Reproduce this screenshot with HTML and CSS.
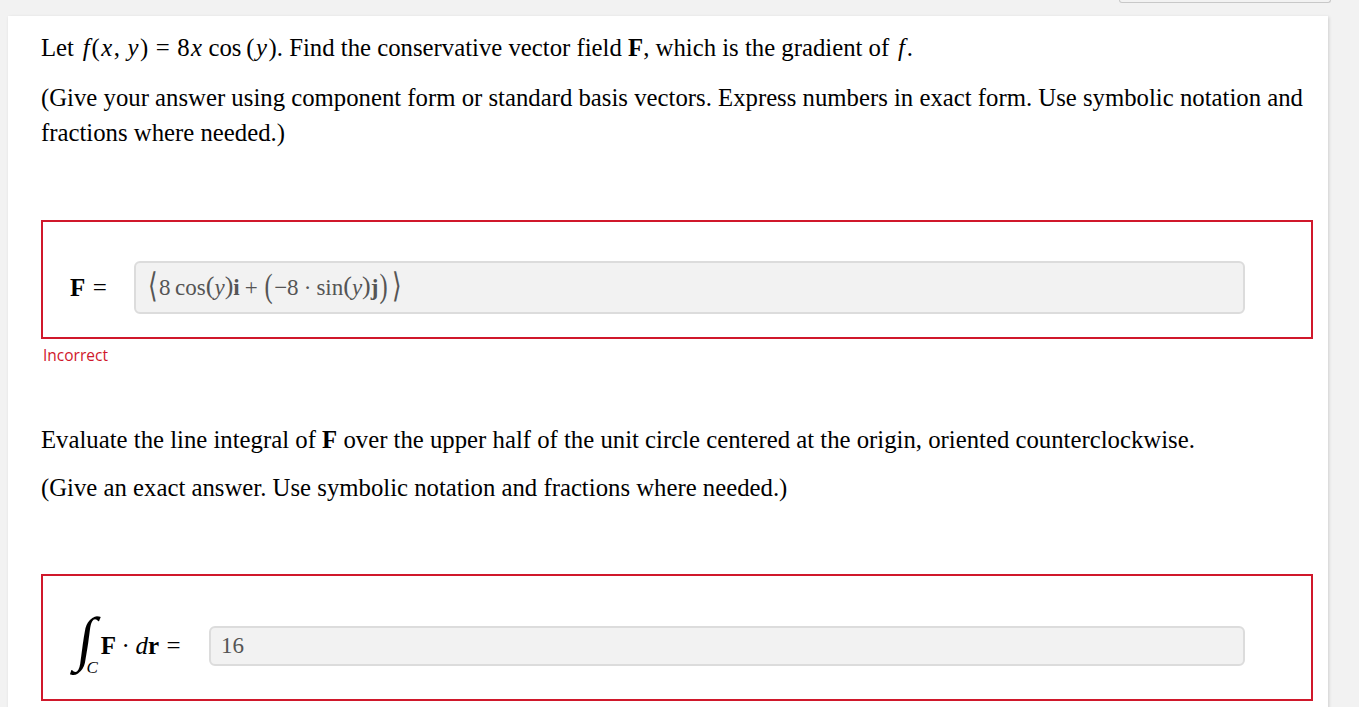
FILE: index.html
```html
<!DOCTYPE html>
<html lang="en">
<head>
  <meta charset="UTF-8" />
  <title>Conservative Vector Field</title>
  <meta name="viewport" content="width=device-width, initial-scale=1.0" />
  <link rel="stylesheet" href="styles.css">
</head>
<body>

<div class="top-bar">
  <div class="tab"></div>
</div>

<div class="card">
  <p class="q">Let <span class="m"><i class="fn">f</i>(<i>x</i>,&nbsp;<i>y</i>)<span class="eq">=</span>8<i>x</i>&thinsp;cos&thinsp;(<i>y</i>)</span>. Find the conservative vector field <b>F</b>, which is the gradient of <span class="m"><i class="fn">f</i></span>.</p>
  <p class="q">(Give your answer using component form or standard basis vectors. Express numbers in exact form. Use symbolic notation and fractions where needed.)</p>

  <div class="answer-box box-one">
    <div class="label"><b>F</b><span class="eq">=</span></div>
    <div class="field field-tall">
      <span class="big">&#10216;</span>8&thinsp;cos<span class="mid">(</span><i>y</i><span class="mid">)</span><b>i</b><span class="op">+</span><span class="big">(</span>&minus;8<span class="op">&middot;</span>sin<span class="mid">(</span><i>y</i><span class="mid">)</span><b>j</b><span class="big">)</span><span class="big">&#10217;</span>
    </div>
  </div>
  <div class="status">Incorrect</div>

  <p class="q q-gap">Evaluate the line integral of <b>F</b> over the upper half of the unit circle centered at the origin, oriented counterclockwise.</p>
  <p class="q q-tight">(Give an exact answer. Use symbolic notation and fractions where needed.)</p>

  <div class="answer-box box-two">
    <div class="label integral">
      <span class="int">&int;</span><span class="sub">C</span>
      <span class="int-rest"><b>F</b><span class="op">&middot;</span><i>d</i><b>r</b><span class="eq">=</span></span>
    </div>
    <div class="field field-short">16</div>
  </div>
</div>

</body>
</html>
```

FILE: styles.css
```css
body { margin: 0; background: #f2f2f2; font-family: "Liberation Serif", "Times New Roman", serif; color: #000; }
.top-bar { display: flex; justify-content: flex-end; padding-right: 28px; height: 16px; }
.tab { width: 210px; height: 2px; border: 1px solid #c8c8c8; border-top: none; border-radius: 0 0 5px 5px; background: #f2f2f2; }
.card { margin-left: 8px; width: 1272px; background: #fff; padding: 14px 15px 8px 33px; box-shadow: 1px 1px 3px rgba(0,0,0,0.15); }
.q { font-size: 24.75px; line-height: 35px; margin: 0 0 15px 0; }
.q-gap { margin-top: 57px; margin-bottom: 13px; }
.q-tight { margin-bottom: 0; }
.m i { font-style: italic; margin: 0 0.06em; }
.m .fn { margin: 0 0.08em 0 0.1em; }
.eq { margin: 0 0.3em; }
.op { margin: 0 0.22em; }
.answer-box { border: 2px solid #d0182b; margin-top: 70px; display: flex; align-items: center; }
.box-one { padding: 39px 66px 23px 27px; }
.box-two { padding: 17px 66px 0 27px; height: 106px; margin-top: 69px; }
.label { font-size: 25px; white-space: nowrap; }
.box-one .label { width: 64px; }
.box-one .label .eq { margin-right: 0; }
.field { flex: 1; background: #f2f2f2; border: 2px solid #dcdcdc; border-radius: 6px; color: #555; font-size: 23px; padding: 0 10px; display: flex; align-items: center; }
.field-tall { height: 49px; }
.field-short { height: 36px; }
.field i { font-style: italic; }
.big { font-size: 34px; line-height: 1; transform: scaleX(0.72); display: inline-block; margin: -4px 0 0 0; }
.mid { font-size: 26px; line-height: 1; display: inline-block; margin-top: -3px; }
.integral { display: flex; align-items: center; width: 139px; }
.int { font-size: 60px; font-style: italic; line-height: 1; transform: translateY(-7px) skewX(-8deg); display: inline-block; margin-left: 8px; }
.sub { font-size: 17px; font-style: italic; align-self: flex-end; margin: 0 0 -2px -8px; }
.int-rest { margin-left: 3px; }
.int-rest .eq { margin-right: 0; }
.status { font-family: "Open Sans", sans-serif; font-size: 15.5px; line-height: 20px; color: #d0182b; margin: 6px 0 0 2px; }
```
